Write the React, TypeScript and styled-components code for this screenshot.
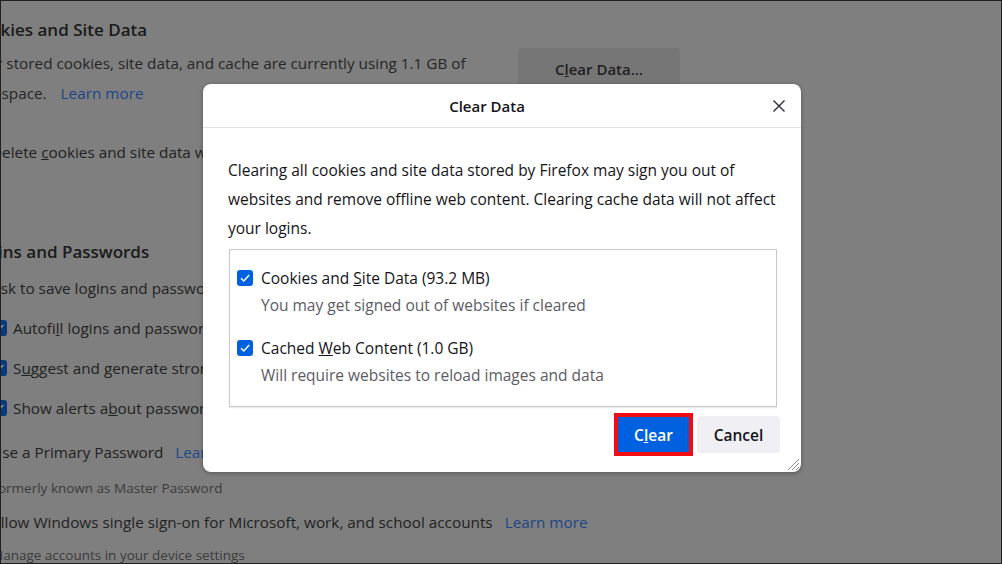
import styled, { createGlobalStyle } from 'styled-components'

const GlobalStyle = createGlobalStyle`
  html, body {
    margin: 0;
    padding: 0;
    background: #7f7f7f;
    overflow: hidden;
  }
  * { box-sizing: border-box; }
`

const Screen = styled.div`
  position: relative;
  width: 1002px;
  height: 564px;
  overflow: hidden;
  background: #7f7f7f;
  border: 1px solid #202020;
  font-family: "Open Sans", "Noto Sans", sans-serif;
`

/* dimmed settings page behind the modal */
const Settings = styled.div`
  margin-left: -32px;
  padding-top: 15px;
  width: 711px;
  color: #1f1f1f;
  font-size: 15.3px;
`

const SectionTitle = styled.h2<{ $gap?: number }>`
  margin: ${p => p.$gap ?? 0}px 0 0;
  font-size: 17px;
  font-weight: 600;
  line-height: 28px;
  color: #1a1a1a;
`

const DescRow = styled.div`
  display: flex;
  align-items: flex-start;
  justify-content: space-between;
  margin-top: 4px;
`

const Desc = styled.p`
  margin: 0;
  line-height: 30px;
  color: #262626;
`

const PageLink = styled.span<{ $gap?: number }>`
  margin-left: ${p => p.$gap ?? 14}px;
  color: #1d4686;
`

const PageButton = styled.div`
  width: 162px;
  height: 42px;
  border-radius: 4px;
  background: #767677;
  color: #1f1f1f;
  font-weight: 600;
  font-size: 15px;
  display: flex;
  align-items: center;
  justify-content: center;
`

const CheckRow = styled.div<{ $gap?: number; $indent?: number }>`
  display: flex;
  align-items: center;
  gap: 6px;
  height: 28px;
  margin-top: ${p => p.$gap ?? 0}px;
  margin-left: ${p => p.$indent ?? 0}px;
  color: #222;
  white-space: nowrap;
`

const Hint = styled.div<{ $gap?: number }>`
  margin: ${p => p.$gap ?? 0}px 0 0 22px;
  font-size: 13.5px;
  line-height: 20px;
  color: #3b3b3b;
  white-space: nowrap;
`

const Box = styled.span<{ $dim?: boolean; $off?: boolean }>`
  flex: none;
  width: 16px;
  height: 16px;
  border-radius: 3px;
  background: ${p => (p.$off ? 'transparent' : p.$dim ? '#0a3a7c' : '#0061e0')};
  border: ${p => (p.$off ? '1px solid #333' : 'none')};
  display: flex;
  align-items: center;
  justify-content: center;
`

/* modal */
const Dialog = styled.div`
  position: absolute;
  left: 202px;
  top: 83px;
  width: 598px;
  height: 388px;
  background: #fff;
  border-radius: 8px;
  box-shadow: 0 1px 4px rgba(0, 0, 0, 0.35);
  display: flex;
  flex-direction: column;
  color: #15141a;
  font-size: 15.5px;
`

const Header = styled.div`
  position: relative;
  height: 44px;
  flex: none;
  display: flex;
  align-items: center;
  justify-content: center;
  padding-right: 30px;
  border-bottom: 1px solid #e0e0e6;
  font-size: 15px;
  font-weight: 600;
`

const CloseBtn = styled.span`
  position: absolute;
  right: 14px;
  top: 14px;
  width: 16px;
  height: 16px;
  display: flex;
`

const Body = styled.div`
  padding: 28px 25px 0 25px;
  display: flex;
  flex-direction: column;
`

const Intro = styled.p`
  margin: 0;
  line-height: 29px;
`

const OptionList = styled.div`
  margin: 6px 0 0 1px;
  width: 548px;
  height: 158px;
  border: 1px solid #c9c9cd;
  box-shadow: 0 1px 1px rgba(0, 0, 0, 0.08);
  padding: 14px 0 0 7px;
`

const Option = styled.div<{ $gap?: number }>`
  margin-top: ${p => p.$gap ?? 0}px;
`

const OptionLabel = styled.div`
  display: flex;
  align-items: center;
  gap: 8px;
  height: 28px;
`

const OptionHint = styled.div`
  margin: 0 0 0 24px;
  line-height: 26px;
  color: #5b5b66;
`

const Footer = styled.div`
  display: flex;
  justify-content: flex-end;
  align-items: center;
  gap: 8px;
  margin-top: 9px;
  padding-right: 21px;
  height: 37px;
`

const Button = styled.button<{ $primary?: boolean }>`
  font-family: inherit;
  font-size: 15.5px;
  font-weight: 600;
  border: none;
  border-radius: 4px;
  cursor: pointer;
  ${p =>
    p.$primary
      ? `
    width: 71px;
    height: 35px;
    background: #0061e0;
    color: #fff;
    border-radius: 0;
    outline: 4px solid #f20d12;
  `
      : `
    width: 83px;
    height: 37px;
    background: #f0f0f4;
    color: #15141a;
  `}
`

const Grip = styled.span`
  position: absolute;
  right: 1px;
  bottom: 1px;
  width: 14px;
  height: 14px;
  display: flex;
`

function Check({ dim, off }: { dim?: boolean; off?: boolean }) {
  return (
    <Box $dim={dim} $off={off}>
      {!off && (
        <svg width="12" height="12" viewBox="0 0 12 12" fill="none">
          <path d="M2 6.3 L4.8 9 L10.2 3" stroke={dim ? '#9a9a9a' : '#fff'} strokeWidth="1.5" />
        </svg>
      )}
    </Box>
  )
}

export default function App() {
  return (
    <>
      <GlobalStyle />
      <Screen>
        <Settings>
          <SectionTitle>Cookies and Site Data</SectionTitle>
          <DescRow>
            <Desc>
              Your stored cookies, site data, and cache are currently using 1.1 GB of
              <br />
              disk space.<PageLink $gap={14}>Learn more</PageLink>
            </Desc>
            <PageButton>
              C<u>l</u>ear Data…
            </PageButton>
          </DescRow>
          <CheckRow $gap={30}>
            <Check dim off />
            <span>
              Delete <u>c</u>ookies and site data when Firefox is closed
            </span>
          </CheckRow>

          <SectionTitle $gap={72}>Logins and Passwords</SectionTitle>
          <CheckRow $gap={8}>
            <Check dim off />
            <span>Ask to save logins and passwords for websites</span>
          </CheckRow>
          <CheckRow $gap={12} $indent={22}>
            <Check dim />
            <span>
              Autofi<u>l</u>l logins and passwords
            </span>
          </CheckRow>
          <CheckRow $gap={12} $indent={22}>
            <Check dim />
            <span>
              S<u>u</u>ggest and generate strong passwords
            </span>
          </CheckRow>
          <CheckRow $gap={12} $indent={22}>
            <Check dim />
            <span>
              Show alerts a<u>b</u>out passwords for breached websites
            </span>
          </CheckRow>
          <CheckRow $gap={16}>
            <Check dim off />
            <span>
              Use a Primary Password<PageLink $gap={12}>Learn more</PageLink>
            </span>
          </CheckRow>
          <Hint $gap={12}>Formerly known as Master Password</Hint>
          <CheckRow $gap={10}>
            <Check dim off />
            <span>
              Allow Windows single sign-on for Microsoft, work, and school accounts
              <PageLink $gap={12}>Learn more</PageLink>
            </span>
          </CheckRow>
          <Hint $gap={9}>Manage accounts in your device settings</Hint>
        </Settings>

        <Dialog>
          <Header>
            Clear Data
            <CloseBtn>
              <svg width="16" height="16" viewBox="0 0 16 16">
                <path d="M2.5 2.5 L13.5 13.5 M13.5 2.5 L2.5 13.5" stroke="#2b2a33" strokeWidth="1.4" />
              </svg>
            </CloseBtn>
          </Header>
          <Body>
            <Intro>
              Clearing all cookies and site data stored by Firefox may sign you out of
              websites and remove offline web content. Clearing cache data will not affect
              your logins.
            </Intro>
            <OptionList>
              <Option>
                <OptionLabel>
                  <Check />
                  <span>
                    Cookies and <u>S</u>ite Data (93.2 MB)
                  </span>
                </OptionLabel>
                <OptionHint>You may get signed out of websites if cleared</OptionHint>
              </Option>
              <Option $gap={16}>
                <OptionLabel>
                  <Check />
                  <span>
                    Cached <u>W</u>eb Content (1.0 GB)
                  </span>
                </OptionLabel>
                <OptionHint>Will require websites to reload images and data</OptionHint>
              </Option>
            </OptionList>
          </Body>
          <Footer>
            <Button $primary>
              C<u>l</u>ear
            </Button>
            <Button>Cancel</Button>
          </Footer>
          <Grip>
            <svg width="14" height="14" viewBox="0 0 14 14">
              <path d="M13 2 L2 13 M13 6 L6 13 M13 10 L10 13" stroke="#8a8a8a" strokeWidth="1" />
            </svg>
          </Grip>
        </Dialog>
      </Screen>
    </>
  )
}
